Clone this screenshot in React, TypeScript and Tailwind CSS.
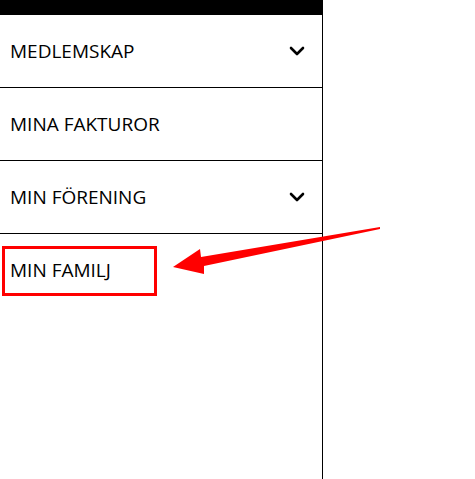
const ITEMS = [
  { label: "MEDLEMSKAP", chevron: true },
  { label: "MINA FAKTUROR", chevron: false },
  { label: "MIN FÖRENING", chevron: true },
  { label: "MIN FAMILJ", chevron: false },
];

function Chevron() {
  return (
    <svg width="16" height="10" viewBox="0 0 16 10" className="block">
      <polyline
        points="2,2 8,8 14,2"
        fill="none"
        stroke="#000"
        strokeWidth="2.6"
        strokeLinecap="round"
        strokeLinejoin="round"
      />
    </svg>
  );
}

export default function App() {
  return (
    <div className="relative h-[479px] w-[475px] overflow-hidden bg-white font-['Open_Sans',sans-serif] text-black">
      <div className="flex h-full w-[323px] flex-col border-r border-black">
        <div className="h-[15px] shrink-0 bg-black" />
        {ITEMS.map(({ label, chevron }, i) => (
          <div
            key={label}
            className={`flex h-[73px] shrink-0 items-center justify-between pl-[10px] pr-[17px] ${
              i < ITEMS.length - 1 ? "border-b border-black" : ""
            }`}
          >
            <span className="text-[19px] font-medium leading-none">{label}</span>
            {chevron && <Chevron />}
          </div>
        ))}
      </div>

      {/* annotation box */}
      <div className="pointer-events-none absolute left-[2px] top-[246px] h-[50px] w-[155px] border-[3px] border-[#ff0000]" />

      {/* annotation arrow */}
      <svg className="pointer-events-none absolute left-0 top-0" width="475" height="479">
        <polygon
          points="173,267 200,249 201,257 380,227 380,229 204,266 204,274"
          fill="#ff0000"
        />
      </svg>
    </div>
  );
}
